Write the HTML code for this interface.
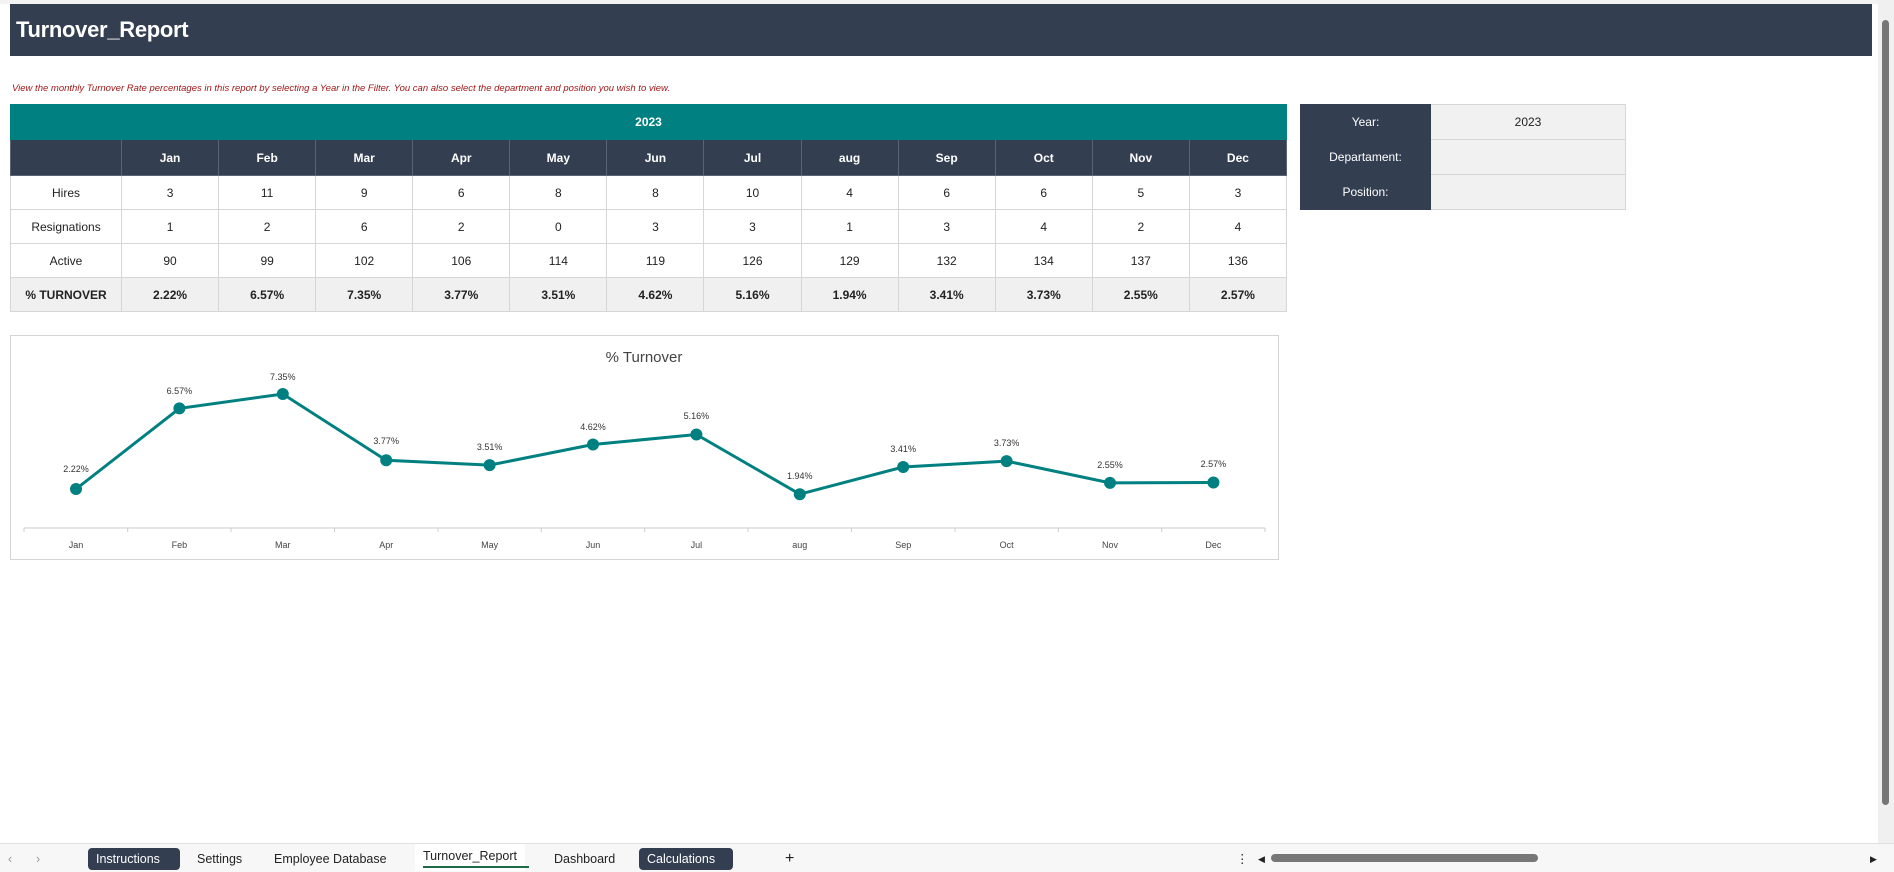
<!DOCTYPE html>
<html><head><meta charset="utf-8"><style>
*{margin:0;padding:0;box-sizing:border-box}
body{width:1894px;height:872px;overflow:hidden;background:#fff;font-family:"Liberation Sans",sans-serif;position:relative;color:#222}
.abs{position:absolute}
#title{left:10px;top:4px;width:1862px;height:52px;background:#333e50;color:#fff;font-weight:bold;font-size:22px;line-height:52px;padding-left:6px;letter-spacing:-0.3px}
#note{left:12px;top:83px;font-size:9.5px;font-style:italic;color:#a01818}
table{border-collapse:collapse;position:absolute;font-size:12px;text-align:center}
#main{left:10px;top:104px;width:1277px}
#main td{border:1px solid #d6d6d6;height:34px}
#main tr.yr td{background:#008080;color:#fff;font-weight:bold;height:35px;border-color:#008080}
#main tr.hd td{background:#333e50;color:#fff;font-weight:bold;height:36px;border-color:#5a6475}
#main tr.tv td{background:#f0f0f0;font-weight:bold;border-top:1.5px solid #999}
#main td:first-child{width:111px}
#filt{left:1300px;top:104px;width:326px}
#filt td{height:35px;border:1px solid #d6d6d6;background:#f1f1f1}
#filt td.l{background:#333e50;color:#fff;width:130px;border-color:#333e50}
#chart{left:10px;top:335px;width:1269px;height:225px;border:1px solid #d4d4d4}
#tabs{left:0;top:843px;width:1894px;height:29px;background:#f7f7f7;border-top:1px solid #e0e0e0;font-size:12.5px}
.tab{position:absolute;top:4px;height:22px;line-height:22px;padding:0 8px;color:#222}
.dk{background:#333e50;color:#fff;border-radius:4px}
</style></head><body>
<div class="abs" style="left:0;top:0;width:1894px;height:4px;background:#f3f3f3"></div>
<div id="title" class="abs">Turnover_Report</div>
<div class="abs" style="left:1878px;top:0;width:16px;height:843px;background:#f0f0f0"></div>
<div class="abs" style="left:1882px;top:20px;width:7px;height:785px;background:#777;border-radius:4px"></div>
<div id="note" class="abs">View the monthly Turnover Rate percentages in this report by selecting a Year in the Filter. You can also select the department and position you wish to view.</div>
<table id="main">
<tr class="yr"><td colspan="13">2023</td></tr>
<tr class="hd"><td></td><td>Jan</td><td>Feb</td><td>Mar</td><td>Apr</td><td>May</td><td>Jun</td><td>Jul</td><td>aug</td><td>Sep</td><td>Oct</td><td>Nov</td><td>Dec</td></tr>
<tr><td>Hires</td><td>3</td><td>11</td><td>9</td><td>6</td><td>8</td><td>8</td><td>10</td><td>4</td><td>6</td><td>6</td><td>5</td><td>3</td></tr>
<tr><td>Resignations</td><td>1</td><td>2</td><td>6</td><td>2</td><td>0</td><td>3</td><td>3</td><td>1</td><td>3</td><td>4</td><td>2</td><td>4</td></tr>
<tr><td>Active</td><td>90</td><td>99</td><td>102</td><td>106</td><td>114</td><td>119</td><td>126</td><td>129</td><td>132</td><td>134</td><td>137</td><td>136</td></tr>
<tr class="tv"><td>% TURNOVER</td><td>2.22%</td><td>6.57%</td><td>7.35%</td><td>3.77%</td><td>3.51%</td><td>4.62%</td><td>5.16%</td><td>1.94%</td><td>3.41%</td><td>3.73%</td><td>2.55%</td><td>2.57%</td></tr>
</table>
<table id="filt">
<tr><td class="l">Year:</td><td>2023</td></tr>
<tr><td class="l">Departament:</td><td></td></tr>
<tr><td class="l">Position:</td><td></td></tr>
</table>
<div id="chart" class="abs"></div>
<svg class="abs" style="left:0;top:0" width="1894" height="872" font-family="Liberation Sans, sans-serif">
<text x="644" y="362" font-size="15" fill="#444" text-anchor="middle">% Turnover</text>
<line x1="24" y1="528" x2="1265" y2="528" stroke="#ccc"/>
<g stroke="#ccc">
<line x1="24" y1="528" x2="24" y2="532"/><line x1="127.7" y1="528" x2="127.7" y2="532"/><line x1="231" y1="528" x2="231" y2="532"/><line x1="334.5" y1="528" x2="334.5" y2="532"/><line x1="438" y1="528" x2="438" y2="532"/><line x1="541.3" y1="528" x2="541.3" y2="532"/><line x1="644.7" y1="528" x2="644.7" y2="532"/><line x1="748" y1="528" x2="748" y2="532"/><line x1="851.5" y1="528" x2="851.5" y2="532"/><line x1="955" y1="528" x2="955" y2="532"/><line x1="1058.3" y1="528" x2="1058.3" y2="532"/><line x1="1161.7" y1="528" x2="1161.7" y2="532"/><line x1="1265" y1="528" x2="1265" y2="532"/>
</g>
<polyline fill="none" stroke="#008080" stroke-width="3" points="76,489 179.4,408.4 282.8,394 386.2,460.3 489.6,465.1 593,444.5 696.4,434.5 799.8,494.2 903.2,467 1006.6,461.1 1110,482.9 1213.4,482.5"/>
<g fill="#008080">
<circle cx="76" cy="489" r="6"/><circle cx="179.4" cy="408.4" r="6"/><circle cx="282.8" cy="394" r="6"/><circle cx="386.2" cy="460.3" r="6"/><circle cx="489.6" cy="465.1" r="6"/><circle cx="593" cy="444.5" r="6"/><circle cx="696.4" cy="434.5" r="6"/><circle cx="799.8" cy="494.2" r="6"/><circle cx="903.2" cy="467" r="6"/><circle cx="1006.6" cy="461.1" r="6"/><circle cx="1110" cy="482.9" r="6"/><circle cx="1213.4" cy="482.5" r="6"/>
</g>
<g font-size="9" fill="#333" text-anchor="middle">
<text x="76" y="472">2.22%</text><text x="179.4" y="394">6.57%</text><text x="282.8" y="380">7.35%</text><text x="386.2" y="444">3.77%</text><text x="489.6" y="450">3.51%</text><text x="593" y="430">4.62%</text><text x="696.4" y="419">5.16%</text><text x="799.8" y="479">1.94%</text><text x="903.2" y="452">3.41%</text><text x="1006.6" y="446">3.73%</text><text x="1110" y="468">2.55%</text><text x="1213.4" y="467">2.57%</text>
</g>
<g font-size="9" fill="#444" text-anchor="middle">
<text x="76" y="548">Jan</text><text x="179.4" y="548">Feb</text><text x="282.8" y="548">Mar</text><text x="386.2" y="548">Apr</text><text x="489.6" y="548">May</text><text x="593" y="548">Jun</text><text x="696.4" y="548">Jul</text><text x="799.8" y="548">aug</text><text x="903.2" y="548">Sep</text><text x="1006.6" y="548">Oct</text><text x="1110" y="548">Nov</text><text x="1213.4" y="548">Dec</text>
</g>
</svg>
<div id="tabs" class="abs">
<span class="tab" style="left:0;color:#999">&lsaquo;</span>
<span class="tab" style="left:28px;color:#999">&rsaquo;</span>
<span class="tab dk" style="left:88px;width:92px">Instructions</span>
<span class="tab" style="left:189px">Settings</span>
<span class="tab" style="left:266px">Employee Database</span>
<span class="tab" style="left:415px;background:#fff;top:0;height:27px;line-height:24px">Turnover_Report</span>
<div class="abs" style="left:423px;top:22px;width:106px;height:2px;background:#1e6b4a"></div>
<span class="tab" style="left:546px">Dashboard</span>
<span class="tab dk" style="left:639px;width:94px">Calculations</span>
<span class="tab" style="left:777px;font-size:16px">+</span>
<span class="tab" style="left:1228px">&#8942;</span>
<span class="tab" style="left:1250px;font-size:9px">&#9664;</span>
<div class="abs" style="left:1271px;top:10px;width:267px;height:8px;background:#777;border-radius:4px"></div>
<span class="tab" style="left:1862px;font-size:9px">&#9654;</span>
</div>
</body></html>
